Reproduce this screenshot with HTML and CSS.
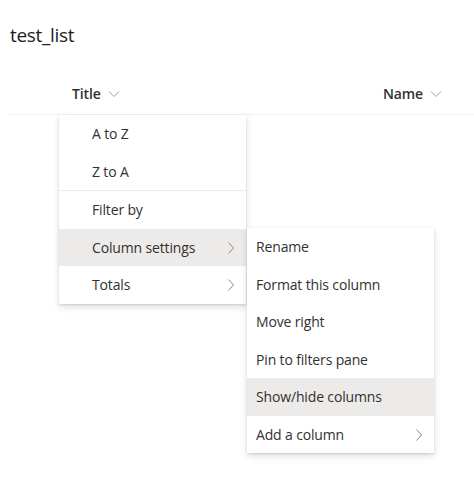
FILE: index.html
```html
<!DOCTYPE html>
<html>
<head>
<meta charset="utf-8">
<link rel="stylesheet" href="styles.css">
</head>
<body>
<div class="page">
  <h1 class="list-title">test_list</h1>
  <div class="header-row">
    <div class="col col-title">Title <svg class="hdr-chev" width="12" height="8" viewBox="0 0 12 8"><path d="M1 1.5 L6 6.5 L11 1.5" fill="none" stroke="#a19f9d" stroke-width="1"/></svg></div>
    <div class="col col-name">Name <svg class="hdr-chev" width="12" height="8" viewBox="0 0 12 8"><path d="M1 1.5 L6 6.5 L11 1.5" fill="none" stroke="#a19f9d" stroke-width="1"/></svg></div>
  </div>
</div>

<div class="menu menu-main">
  <div class="item">A to Z</div>
  <div class="item">Z to A</div>
  <div class="divider"></div>
  <div class="item">Filter by</div>
  <div class="item active">Column settings <svg class="sub-chev" width="8" height="14" viewBox="0 0 8 14"><path d="M1.5 1.5 L6.5 7 L1.5 12.5" fill="none" stroke="#8a8886" stroke-width="1"/></svg></div>
  <div class="item">Totals <svg class="sub-chev" width="8" height="14" viewBox="0 0 8 14"><path d="M1.5 1.5 L6.5 7 L1.5 12.5" fill="none" stroke="#8a8886" stroke-width="1"/></svg></div>
</div>

<div class="menu menu-sub">
  <div class="item">Rename</div>
  <div class="item">Format this column</div>
  <div class="item">Move right</div>
  <div class="item">Pin to filters pane</div>
  <div class="item active">Show/hide columns</div>
  <div class="item">Add a column <svg class="sub-chev" width="8" height="14" viewBox="0 0 8 14"><path d="M1.5 1.5 L6.5 7 L1.5 12.5" fill="none" stroke="#8a8886" stroke-width="1"/></svg></div>
</div>
</body>
</html>
```

FILE: styles.css
```css
html, body {
  margin: 0;
  padding: 0;
  background: #ffffff;
}
body {
  font-family: "Open Sans", "Noto Sans", "Liberation Sans", sans-serif;
  color: #323130;
  width: 474px;
  height: 483px;
  overflow: hidden;
  position: relative;
}
.page {
  padding-top: 21px;
}
.list-title {
  margin: 0;
  padding-left: 10px;
  font-size: 19px;
  line-height: 28px;
  font-weight: 400;
  color: #201f1e;
  letter-spacing: -0.3px;
}
.header-row {
  margin-top: 23px;
  margin-left: 8px;
  height: 42px;
  border-bottom: 1px solid #f3f2f1;
  display: flex;
  align-items: center;
  position: relative;
}
.col {
  font-size: 14px;
  font-weight: 600;
  color: #323130;
  display: flex;
  align-items: center;
  gap: 7px;
  letter-spacing: -0.1px;
}
.col-title {
  margin-left: 64px;
}
.col-name {
  margin-left: auto;
  margin-right: 32px;
}
.hdr-chev {
  display: block;
  margin-top: 1px;
}
.menu {
  position: absolute;
  background: #ffffff;
  width: 187px;
  box-shadow: 0 3.2px 7.2px 0 rgba(0,0,0,0.132), 0 0.6px 1.8px 0 rgba(0,0,0,0.108);
}
.menu-main {
  left: 59px;
  top: 115px;
}
.menu-sub {
  left: 247px;
  top: 228px;
}
.item {
  height: 37.5px;
  display: flex;
  align-items: center;
  font-size: 14px;
  color: #323130;
  letter-spacing: -0.15px;
  position: relative;
}
.menu-main .item {
  padding-left: 33px;
}
.menu-sub .item {
  padding-left: 9px;
}
.item.active {
  background: #edebe9;
}
.divider {
  height: 1px;
  background: #edebe9;
}
.sub-chev {
  position: absolute;
  right: 11px;
  top: 12px;
}
```
